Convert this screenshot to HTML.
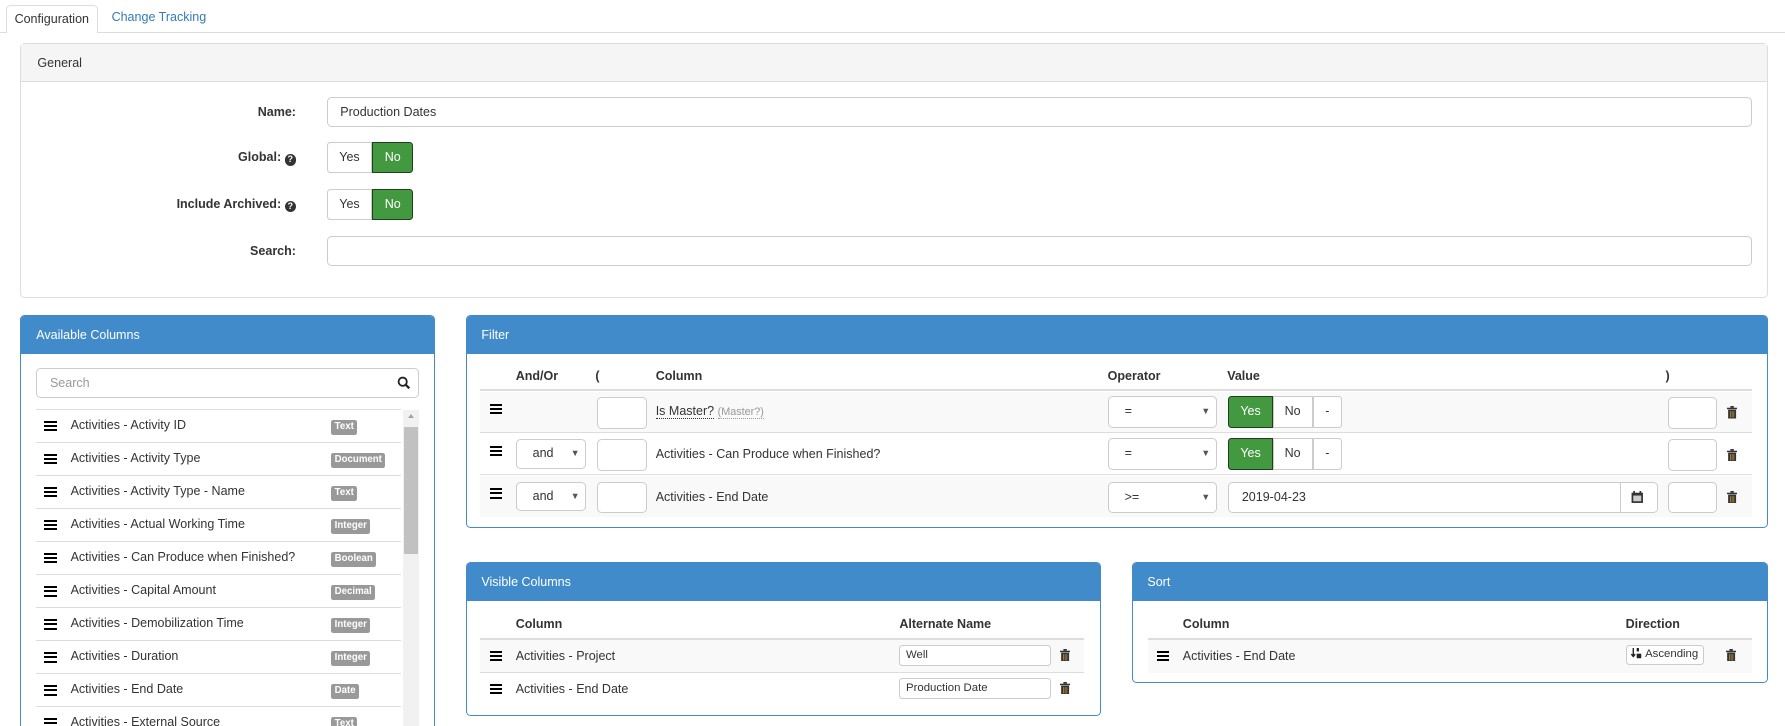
<!DOCTYPE html>
<html><head><meta charset="utf-8"><style>
*{box-sizing:border-box}
html,body{margin:0;padding:0;background:#fff;overflow:hidden;width:1785px;height:726px}
#w{zoom:1.1384;position:relative;width:1568px;height:638px;font-family:"Liberation Sans",Arial,sans-serif;font-size:11px;color:#333}
.a{position:absolute}
.panel{position:absolute;border:1px solid #ddd;border-radius:4px;background:#fff}
.bp{border-color:#428bca}
.ph{position:absolute;left:0;right:0;top:0;height:33px;padding:10px 13px;font-size:11px}
.bp .ph{background:#428bca;color:#fff;border-radius:3px 3px 0 0}
.inp{position:absolute;border:1px solid #ccc;border-radius:4px;background:#fff;padding:0 11px;line-height:25px;font-size:11px}
.lbl{position:absolute;font-weight:bold;text-align:right;width:240px;font-size:11px}
.tg{position:absolute;height:27px;display:flex;border-radius:3px;font-size:11px}
.tg span{display:block;border:1px solid #ccc;line-height:25px;text-align:center;background:#fff}
.tg .on{background:#43993f;color:#fff;border-color:#1f3f1d}
.hb{position:absolute;width:11px;height:9px;border-top:2px solid #000;border-bottom:2px solid #000}
.hb:after{content:"";position:absolute;left:0;right:0;top:1.5px;border-top:2px solid #000}
.badge{position:absolute;background:#999;color:#fff;font-weight:bold;font-size:8.5px;padding:2px 3px;border-radius:2px;line-height:9px}
.th{position:absolute;font-weight:bold;font-size:11px}
.sel{position:absolute;border:1px solid #ccc;border-radius:4px;background:#fff;height:26px;line-height:24px;padding-left:14px;font-size:11px}
.sel:after{content:"\25BC";position:absolute;right:5px;top:0;font-size:8px;color:#555}
.trash{position:absolute;width:9px;height:11px}
.q{display:inline-block;width:10px;height:10px;border-radius:50%;background:#333;color:#fff;font-size:8px;line-height:10px;text-align:center;vertical-align:-1px}
</style></head><body><div id="w">
<div class="a" style="left:0;right:0;top:28px;border-top:1px solid #ddd"></div>
<div class="a" style="left:5px;top:4px;width:81px;height:25px;border:1px solid #ddd;border-bottom:none;border-radius:4px 4px 0 0;background:#fff;text-align:center;line-height:23px;font-size:11px">Configuration</div>
<div class="a" style="left:98px;top:9px;color:#337ab7;font-size:11px">Change Tracking</div>

<div class="panel" style="left:18px;top:38px;width:1535px;height:224px">
<div class="ph" style="background:#f5f5f5;border-bottom:1px solid #ddd;height:33px;font-size:11px;padding:10px 14px">General</div>
</div>
<div class="lbl" style="left:20px;top:92px">Name:</div>
<div class="inp" style="left:287px;top:85px;width:1252px;height:27px">Production Dates</div>
<div class="lbl" style="left:20px;top:132px">Global: <span class="q">?</span></div>
<div class="tg" style="left:287px;top:125px"><span style="width:40px;border-radius:3px 0 0 3px">Yes</span><span class="on" style="width:36px;border-radius:0 3px 3px 0">No</span></div>
<div class="lbl" style="left:20px;top:173px">Include Archived: <span class="q">?</span></div>
<div class="tg" style="left:287px;top:166px"><span style="width:40px;border-radius:3px 0 0 3px">Yes</span><span class="on" style="width:36px;border-radius:0 3px 3px 0">No</span></div>
<div class="lbl" style="left:20px;top:214px">Search:</div>
<div class="inp" style="left:287px;top:207px;width:1252px;height:27px"></div>

<div class="panel bp" style="left:18px;top:277px;width:364px;height:380px">
<div class="ph">Available Columns</div>
</div>
<div class="inp" style="left:32px;top:323px;width:336px;height:27px;color:#999">Search</div>
<svg class="a" style="left:349px;top:330px" width="12" height="12" viewBox="0 0 12 12"><circle cx="5" cy="5" r="3.6" fill="none" stroke="#222" stroke-width="1.6"/><path d="M7.6 7.6 L10.8 10.8" stroke="#222" stroke-width="2"/></svg>
<div class="a" style="left:354px;top:360px;width:14px;height:290px;background:#f1f1f1"></div>
<div class="a" style="left:355px;top:375px;width:12px;height:112px;background:#c1c1c1"></div>
<div class="a" style="left:358px;top:364px;border:3px solid transparent;border-bottom:4px solid #a3a3a3;border-top:none"></div>
<div class="a" style="left:32px;top:359px;width:320px;border-top:1px solid #ddd"></div>
<div id="list"></div>

<div class="panel bp" style="left:409px;top:277px;width:1144px;height:187px">
<div class="ph">Filter</div>
</div>
<div class="th" style="left:453px;top:324px">And/Or</div>
<div class="th" style="left:523px;top:324px">(</div>
<div class="th" style="left:576px;top:324px">Column</div>
<div class="th" style="left:973px;top:324px">Operator</div>
<div class="th" style="left:1078px;top:324px">Value</div>
<div class="th" style="left:1463px;top:324px">)</div>
<div class="a" style="left:422px;top:342px;width:1117px;border-top:2px solid #ddd"></div>
<div class="a" style="left:422px;top:344px;width:1117px;height:36px;background:#f9f9f9;border-bottom:1px solid #ddd"></div>
<div class="a" style="left:422px;top:381px;width:1117px;height:36px;background:#fff;border-bottom:1px solid #ddd"></div>
<div class="a" style="left:422px;top:418px;width:1117px;height:36px;background:#f9f9f9"></div>

<div class="hb" style="left:430px;top:355px"></div>
<div class="inp" style="left:524px;top:349px;width:44px;height:28px"></div>
<div class="a" style="left:576px;top:355px;font-size:11px"><span style="border-bottom:1px dotted #333">Is Master?</span> <span style="color:#999;font-size:9.5px;border-bottom:1px dotted #999">(Master?)</span></div>
<div class="sel" style="left:973px;top:348px;width:96px;height:28px;line-height:26px">=</div>
<div class="tg" style="left:1079px;top:348px;height:28px"><span class="on" style="width:39px;border-radius:3px 0 0 3px;line-height:26px">Yes</span><span style="width:35px;line-height:26px">No</span><span style="width:26px;border-radius:0 3px 3px 0;line-height:26px">-</span></div>
<div class="inp" style="left:1465px;top:349px;width:43px;height:28px"></div>

<div class="hb" style="left:430px;top:392px"></div>
<div class="sel" style="left:453px;top:386px;width:62px;height:26px">and</div>
<div class="inp" style="left:524px;top:386px;width:44px;height:28px"></div>
<div class="a" style="left:576px;top:393px">Activities - Can Produce when Finished?</div>
<div class="sel" style="left:973px;top:385px;width:96px;height:28px;line-height:26px">=</div>
<div class="tg" style="left:1079px;top:385px;height:28px"><span class="on" style="width:39px;border-radius:3px 0 0 3px;line-height:26px">Yes</span><span style="width:35px;line-height:26px">No</span><span style="width:26px;border-radius:0 3px 3px 0;line-height:26px">-</span></div>
<div class="inp" style="left:1465px;top:386px;width:43px;height:28px"></div>

<div class="hb" style="left:430px;top:429px"></div>
<div class="sel" style="left:453px;top:423px;width:62px;height:26px">and</div>
<div class="inp" style="left:524px;top:423px;width:44px;height:28px"></div>
<div class="a" style="left:576px;top:430px">Activities - End Date</div>
<div class="sel" style="left:973px;top:423px;width:96px;height:28px;line-height:26px">&gt;=</div>
<div class="inp" style="left:1079px;top:423px;width:377px;height:28px;line-height:26px">2019-04-23</div>
<div class="a" style="left:1423px;top:424px;width:32px;height:26px;border-left:1px solid #ccc;background:#fff;border-radius:0 4px 4px 0"></div>
<svg class="a" style="left:1433px;top:431px" width="11" height="11" viewBox="0 0 11 11"><rect x="0.5" y="1.5" width="10" height="9" fill="#333"/><rect x="2" y="4" width="7" height="5" fill="#ccc"/><rect x="2" y="0" width="1.5" height="2.5" fill="#333"/><rect x="7.5" y="0" width="1.5" height="2.5" fill="#333"/></svg>
<div class="inp" style="left:1465px;top:423px;width:43px;height:28px"></div>

<div class="panel bp" style="left:409px;top:494px;width:558px;height:135px">
<div class="ph">Visible Columns</div>
</div>
<div class="th" style="left:453px;top:542px">Column</div>
<div class="th" style="left:790px;top:542px">Alternate Name</div>
<div class="a" style="left:422px;top:560px;width:530px;border-top:2px solid #ddd"></div>
<div class="a" style="left:422px;top:562px;width:530px;height:29px;background:#f9f9f9;border-bottom:1px solid #ddd"></div>
<div class="hb" style="left:430px;top:572px"></div>
<div class="a" style="left:453px;top:570px">Activities - Project</div>
<div class="inp" style="left:790px;top:567px;width:133px;height:18px;line-height:16px;padding:0 5px;font-size:10px;border-radius:3px">Well</div>
<div class="hb" style="left:430px;top:601px"></div>
<div class="a" style="left:453px;top:599px">Activities - End Date</div>
<div class="inp" style="left:790px;top:596px;width:133px;height:18px;line-height:16px;padding:0 5px;font-size:10px;border-radius:3px">Production Date</div>

<div class="panel bp" style="left:994px;top:494px;width:559px;height:106px">
<div class="ph">Sort</div>
</div>
<div class="th" style="left:1039px;top:542px">Column</div>
<div class="th" style="left:1428px;top:542px">Direction</div>
<div class="a" style="left:1008px;top:560px;width:531px;border-top:2px solid #ddd"></div>
<div class="a" style="left:1008px;top:562px;width:531px;height:29px;background:#f9f9f9"></div>
<div class="hb" style="left:1016px;top:572px"></div>
<div class="a" style="left:1039px;top:570px">Activities - End Date</div>
<div class="a" style="left:1428px;top:567px;width:69px;height:17px;border:1px solid #ccc;border-radius:3px;background:#fff;font-size:10px;line-height:15px;padding-left:4px"><svg width="10" height="9" viewBox="0 0 10 9" style="vertical-align:-1px"><path d="M2 0V7M0.3 5.3L2 7.5 3.7 5.3" stroke="#222" stroke-width="1.2" fill="none"/><rect x="5" y="0" width="2" height="3" fill="#222"/><rect x="5" y="5" width="4" height="4" fill="#222"/></svg> Ascending</div>

<div id="tr"></div>
</div>
<script>
var items=[["Activities - Activity ID","Text"],["Activities - Activity Type","Document"],["Activities - Activity Type - Name","Text"],["Activities - Actual Working Time","Integer"],["Activities - Can Produce when Finished?","Boolean"],["Activities - Capital Amount","Decimal"],["Activities - Demobilization Time","Integer"],["Activities - Duration","Integer"],["Activities - End Date","Date"],["Activities - External Source","Text"]];
var h="";
items.forEach(function(it,i){var y=360+i*29;
h+='<div class="a" style="left:32px;top:'+y+'px;width:320px;height:29px;border-bottom:1px solid #ddd"></div>';
h+='<div class="hb" style="left:39px;top:'+(y+10)+'px"></div>';
h+='<div class="a" style="left:62px;top:'+(y+7)+'px">'+it[0]+'</div>';
h+='<div class="badge" style="left:291px;top:'+(y+9)+'px">'+it[1]+'</div>';});
document.getElementById("list").outerHTML=h;
var t="";
[[1517,357],[1517,394],[1517,431],[931,599],[931,570],[1516,570]].forEach(function(p){
t+='<svg class="trash" style="left:'+p[0]+'px;top:'+p[1]+'px" viewBox="0 0 9 11"><rect x="0" y="1.5" width="9" height="1.3" fill="#333"/><rect x="3" y="0" width="3" height="1.5" fill="#333"/><rect x="1" y="3.2" width="7" height="7.8" fill="#333"/><path d="M3 4.5V10M4.5 4.5V10M6 4.5V10" stroke="#b88a3a" stroke-width="0.7"/></svg>';});
document.getElementById("tr").outerHTML=t;
</script>
</body></html>
